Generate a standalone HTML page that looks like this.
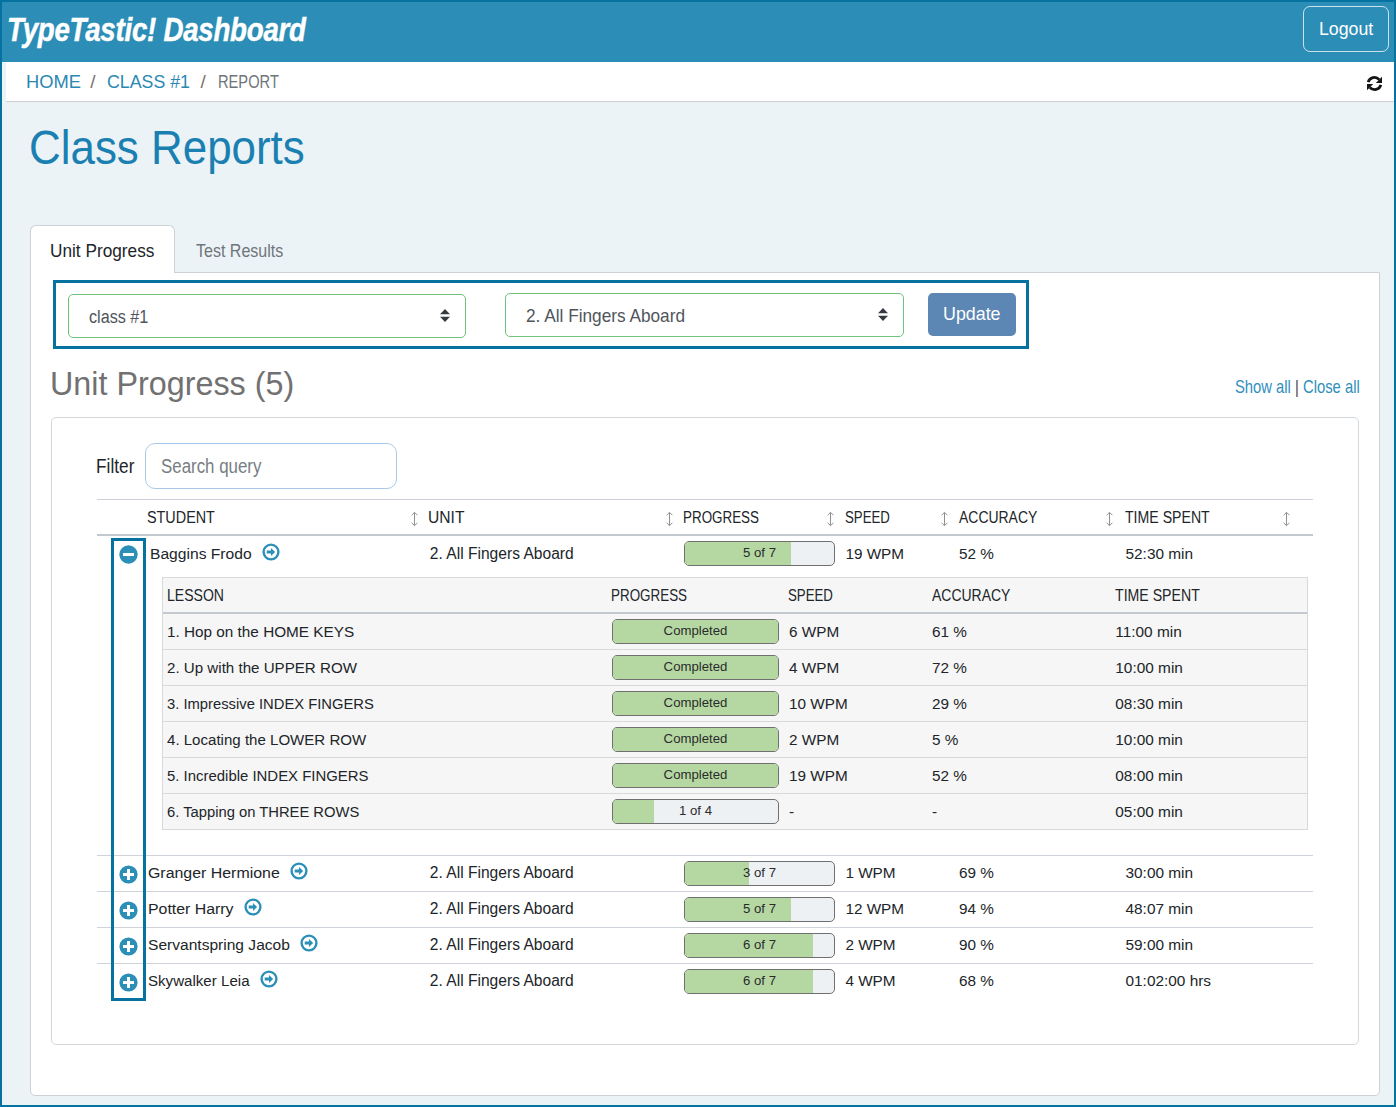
<!DOCTYPE html>
<html><head><meta charset="utf-8"><title>TypeTastic! Dashboard</title>
<style>
html,body{margin:0;padding:0;}
body{width:1396px;height:1107px;background:#ecf3f7;position:relative;overflow:hidden;font-family:"Liberation Sans", sans-serif;}
.t{position:absolute;line-height:1;white-space:nowrap;}
.b{position:absolute;}
</style></head><body>
<div class="b" style="left:0px;top:0px;width:1396px;height:62px;background:#2c8db6;"></div>
<div class="t" style="left:6.7px;top:13.44px;font-size:33.5px;color:#fff;transform:scaleX(0.826);transform-origin:0 0;font-weight:bold;font-style:italic;letter-spacing:-0.3px;-webkit-text-stroke:0.5px #fff;">TypeTastic! Dashboard</div>
<div class="b" style="left:1303px;top:6px;width:86px;height:46px;border:1px solid rgba(255,255,255,0.75);border-radius:7px;box-sizing:border-box;"></div>
<div class="t" style="left:1318.74px;top:20.03px;font-size:18.75px;color:#fff;transform:scaleX(0.9466);transform-origin:0 0;">Logout</div>
<div class="b" style="left:6px;top:62px;width:1388px;height:39px;background:#fff;border-bottom:1px solid #cdd1d4;"></div>
<div class="t" style="left:25.70px;top:71.78px;font-size:19.04px;color:#2a88b2;transform:scaleX(0.9609);transform-origin:0 0;">HOME</div>
<div class="t" style="left:90.2px;top:71.82px;font-size:19px;color:#7d7068;">/</div>
<div class="t" style="left:107.10px;top:71.78px;font-size:19.04px;color:#2a88b2;transform:scaleX(0.9332);transform-origin:0 0;">CLASS #1</div>
<div class="t" style="left:200.5px;top:71.82px;font-size:19px;color:#7d7068;">/</div>
<div class="t" style="left:218.00px;top:71.78px;font-size:19.04px;color:#6f757b;transform:scaleX(0.7706);transform-origin:0 0;">REPORT</div>
<svg class="b" style="left:1366px;top:75px" width="17" height="17" viewBox="0 0 17 17">
<path d="M2.2 7.2 A6.4 6.4 0 0 1 13.2 4.6" fill="none" stroke="#151515" stroke-width="2.8"/>
<path d="M16 1.8 L16 8 L9.8 8 Z" fill="#151515"/>
<path d="M14.8 9.8 A6.4 6.4 0 0 1 3.8 12.4" fill="none" stroke="#151515" stroke-width="2.8"/>
<path d="M1 15.2 L1 9 L7.2 9 Z" fill="#151515"/>
</svg>
<div class="t" style="left:28.77px;top:124.22px;font-size:47.82px;color:#1a80b1;transform:scaleX(0.9185);transform-origin:0 0;">Class Reports</div>
<div class="b" style="left:30px;top:272px;width:1350px;height:824px;background:#fff;border:1px solid #cdd2d6;border-top-color:#cdd2d6;border-radius:0 0 5px 5px;box-sizing:border-box;"></div>
<div class="b" style="left:30px;top:225px;width:145px;height:48px;background:#fff;border:1px solid #cdd2d6;border-bottom:none;border-radius:6px 6px 0 0;box-sizing:border-box;"></div>
<div class="t" style="left:49.87px;top:242.24px;font-size:18.02px;color:#212529;transform:scaleX(0.9567);transform-origin:0 0;">Unit Progress</div>
<div class="t" style="left:195.74px;top:242.22px;font-size:18.17px;color:#6f757b;transform:scaleX(0.8819);transform-origin:0 0;">Test Results</div>
<div class="b" style="left:68px;top:294px;width:398px;height:44px;border:1px solid #6ec27a;border-radius:5px;box-sizing:border-box;"></div>
<div class="b" style="left:505px;top:293px;width:399px;height:44px;border:1px solid #6ec27a;border-radius:5px;box-sizing:border-box;"></div>
<div class="t" style="left:89.01px;top:307.59px;font-size:18.79px;color:#4f555b;transform:scaleX(0.8613);transform-origin:0 0;">class #1</div>
<div class="t" style="left:525.63px;top:307.12px;font-size:18.17px;color:#4f555b;transform:scaleX(0.9488);transform-origin:0 0;">2. All Fingers Aboard</div>
<svg class="b" style="left:440px;top:309px" width="10" height="13" viewBox="0 0 10 13"><path d="M0 5.2 L5 0 L10 5.2 Z M0 7.8 L5 13 L10 7.8 Z" fill="#343a40"/></svg>
<svg class="b" style="left:878px;top:308px" width="10" height="13" viewBox="0 0 10 13"><path d="M0 5.2 L5 0 L10 5.2 Z M0 7.8 L5 13 L10 7.8 Z" fill="#343a40"/></svg>
<div class="b" style="left:928px;top:293px;width:88px;height:43px;background:#5c86b3;border-radius:5px;"></div>
<div class="t" style="left:943.12px;top:304.92px;font-size:18.17px;color:#fff;transform:scaleX(0.9827);transform-origin:0 0;">Update</div>
<div class="t" style="left:49.51px;top:366.68px;font-size:33.58px;color:#717171;transform:scaleX(0.9623);transform-origin:0 0;">Unit Progress (5)</div>
<div class="t" style="left:1234.73px;top:378.79px;font-size:17.73px;color:#2f8fbd;transform:scaleX(0.8346);transform-origin:0 0;"><span style="color:#2f8fbd">Show all</span> <span style="color:#454545">|</span> <span style="color:#2f8fbd">Close all</span></div>
<div class="b" style="left:51px;top:417px;width:1308px;height:628px;border:1px solid #d3d8dc;border-radius:5px;box-sizing:border-box;"></div>
<div class="t" style="left:96.18px;top:457.07px;font-size:19.77px;color:#212529;transform:scaleX(0.8743);transform-origin:0 0;">Filter</div>
<div class="b" style="left:145px;top:443px;width:252px;height:46px;border:1px solid #a9c9e8;border-radius:10px;box-sizing:border-box;"></div>
<div class="t" style="left:161.23px;top:456.57px;font-size:19.77px;color:#777d83;transform:scaleX(0.8539);transform-origin:0 0;">Search query</div>
<div class="b" style="left:97px;top:499px;width:1216px;height:1px;background:#ccd1d7;"></div>
<div class="b" style="left:97px;top:534px;width:1216px;height:2px;background:#c4c9d0;"></div>
<div class="b" style="left:97px;top:855px;width:1216px;height:1px;background:#cfd4da;"></div>
<div class="b" style="left:97px;top:891px;width:1216px;height:1px;background:#cfd4da;"></div>
<div class="b" style="left:97px;top:927px;width:1216px;height:1px;background:#cfd4da;"></div>
<div class="b" style="left:97px;top:963px;width:1216px;height:1px;background:#cfd4da;"></div>
<div class="t" style="left:147.25px;top:509.24px;font-size:16.13px;color:#212529;transform:scaleX(0.8923);transform-origin:0 0;">STUDENT</div>
<svg class="b" style="left:410px;top:511px" width="9" height="16" viewBox="0 0 9 16"><path d="M4.5 1.6 V14.4 M1.6 4.2 L4.5 1.3 L7.4 4.2 M1.6 11.8 L4.5 14.7 L7.4 11.8" fill="none" stroke="#8f8f8f" stroke-width="1"/></svg>
<div class="t" style="left:428.29px;top:509.24px;font-size:16.13px;color:#212529;transform:scaleX(0.9688);transform-origin:0 0;">UNIT</div>
<svg class="b" style="left:665px;top:511px" width="9" height="16" viewBox="0 0 9 16"><path d="M4.5 1.6 V14.4 M1.6 4.2 L4.5 1.3 L7.4 4.2 M1.6 11.8 L4.5 14.7 L7.4 11.8" fill="none" stroke="#8f8f8f" stroke-width="1"/></svg>
<div class="t" style="left:683.40px;top:509.24px;font-size:16.13px;color:#212529;transform:scaleX(0.8324);transform-origin:0 0;">PROGRESS</div>
<svg class="b" style="left:826px;top:511px" width="9" height="16" viewBox="0 0 9 16"><path d="M4.5 1.6 V14.4 M1.6 4.2 L4.5 1.3 L7.4 4.2 M1.6 11.8 L4.5 14.7 L7.4 11.8" fill="none" stroke="#8f8f8f" stroke-width="1"/></svg>
<div class="t" style="left:844.80px;top:509.24px;font-size:16.13px;color:#212529;transform:scaleX(0.8216);transform-origin:0 0;">SPEED</div>
<svg class="b" style="left:940px;top:511px" width="9" height="16" viewBox="0 0 9 16"><path d="M4.5 1.6 V14.4 M1.6 4.2 L4.5 1.3 L7.4 4.2 M1.6 11.8 L4.5 14.7 L7.4 11.8" fill="none" stroke="#8f8f8f" stroke-width="1"/></svg>
<div class="t" style="left:958.87px;top:509.24px;font-size:16.13px;color:#212529;transform:scaleX(0.8663);transform-origin:0 0;">ACCURACY</div>
<svg class="b" style="left:1105px;top:511px" width="9" height="16" viewBox="0 0 9 16"><path d="M4.5 1.6 V14.4 M1.6 4.2 L4.5 1.3 L7.4 4.2 M1.6 11.8 L4.5 14.7 L7.4 11.8" fill="none" stroke="#8f8f8f" stroke-width="1"/></svg>
<div class="t" style="left:1125.18px;top:509.24px;font-size:16.13px;color:#212529;transform:scaleX(0.8764);transform-origin:0 0;">TIME SPENT</div>
<svg class="b" style="left:1282px;top:511px" width="9" height="16" viewBox="0 0 9 16"><path d="M4.5 1.6 V14.4 M1.6 4.2 L4.5 1.3 L7.4 4.2 M1.6 11.8 L4.5 14.7 L7.4 11.8" fill="none" stroke="#8f8f8f" stroke-width="1"/></svg>
<svg class="b" style="left:119.0px;top:544.8px" width="19" height="19" viewBox="0 0 19 19"><circle cx="9.5" cy="9.5" r="9.2" fill="#2b8fb8"/><rect x="4" y="8" width="11" height="3" fill="#fff"/></svg>
<div class="t" style="left:150.22px;top:545.66px;font-size:15.40px;color:#212529;transform:scaleX(1.0148);transform-origin:0 0;">Baggins Frodo</div>
<svg class="b" style="left:262.2px;top:542.7px" width="18" height="18" viewBox="0 0 18 18"><circle cx="9" cy="9" r="7.4" fill="none" stroke="#2b8fb8" stroke-width="2.4"/><path d="M4.7 7.5 H9 V5 L13.1 9 L9 13 V10.5 H4.7 Z" fill="#2b8fb8"/></svg>
<div class="t" style="left:429.8px;top:546.29px;font-size:15.6px;color:#212529;">2. All Fingers Aboard</div>
<div class="b" style="left:684px;top:541px;width:151px;height:25px;border:1px solid #707070;border-radius:5px;box-sizing:border-box;background:#eef1f4;overflow:hidden;"><div style="position:absolute;left:0;top:0;bottom:0;width:106px;background:#b5d8a3;"></div><div style="position:absolute;left:0;right:0;top:0;bottom:0;text-align:center;font-size:13.2px;line-height:21px;color:#2b2b2b;">5 of 7</div></div>
<div class="t" style="left:845.4px;top:545.75px;font-size:15.3px;color:#212529;">19 WPM</div>
<div class="t" style="left:958.9px;top:545.75px;font-size:15.3px;color:#212529;">52 %</div>
<div class="t" style="left:1125.5px;top:545.66px;font-size:15.4px;color:#212529;">52:30 min</div>
<div class="b" style="left:162px;top:577px;width:1146px;height:253px;background:#f6f6f6;border:1px solid #d7dadd;box-sizing:border-box;"></div>
<div class="b" style="left:163px;top:612px;width:1144px;height:2px;background:#c4c9d0;"></div>
<div class="b" style="left:163px;top:649px;width:1144px;height:1px;background:#d7dadd;"></div>
<div class="b" style="left:163px;top:685px;width:1144px;height:1px;background:#d7dadd;"></div>
<div class="b" style="left:163px;top:721px;width:1144px;height:1px;background:#d7dadd;"></div>
<div class="b" style="left:163px;top:757px;width:1144px;height:1px;background:#d7dadd;"></div>
<div class="b" style="left:163px;top:793px;width:1144px;height:1px;background:#d7dadd;"></div>
<div class="t" style="left:167.15px;top:587.91px;font-size:15.70px;color:#212529;transform:scaleX(0.8950);transform-origin:0 0;">LESSON</div>
<div class="t" style="left:610.90px;top:587.91px;font-size:15.70px;color:#212529;transform:scaleX(0.8555);transform-origin:0 0;">PROGRESS</div>
<div class="t" style="left:788.40px;top:587.91px;font-size:15.70px;color:#212529;transform:scaleX(0.8444);transform-origin:0 0;">SPEED</div>
<div class="t" style="left:931.97px;top:587.91px;font-size:15.70px;color:#212529;transform:scaleX(0.8904);transform-origin:0 0;">ACCURACY</div>
<div class="t" style="left:1114.98px;top:587.91px;font-size:15.70px;color:#212529;transform:scaleX(0.9007);transform-origin:0 0;">TIME SPENT</div>
<div class="t" style="left:166.63px;top:623.73px;font-size:15.20px;color:#212529;transform:scaleX(1.0076);transform-origin:0 0;">1. Hop on the HOME KEYS</div>
<div class="b" style="left:612px;top:618.5px;width:167px;height:25px;border:1px solid #707070;border-radius:5px;box-sizing:border-box;background:#eef1f4;overflow:hidden;"><div style="position:absolute;left:0;top:0;bottom:0;width:165px;background:#b5d8a3;"></div><div style="position:absolute;left:0;right:0;top:0;bottom:0;text-align:center;font-size:13.2px;line-height:21px;color:#2b2b2b;">Completed</div></div>
<div class="t" style="left:789px;top:623.65px;font-size:15.3px;color:#212529;">6 WPM</div>
<div class="t" style="left:932px;top:623.65px;font-size:15.3px;color:#212529;">61 %</div>
<div class="t" style="left:1115.3px;top:623.56px;font-size:15.4px;color:#212529;">11:00 min</div>
<div class="t" style="left:167.04px;top:659.73px;font-size:15.20px;color:#212529;transform:scaleX(0.9959);transform-origin:0 0;">2. Up with the UPPER ROW</div>
<div class="b" style="left:612px;top:654.5px;width:167px;height:25px;border:1px solid #707070;border-radius:5px;box-sizing:border-box;background:#eef1f4;overflow:hidden;"><div style="position:absolute;left:0;top:0;bottom:0;width:165px;background:#b5d8a3;"></div><div style="position:absolute;left:0;right:0;top:0;bottom:0;text-align:center;font-size:13.2px;line-height:21px;color:#2b2b2b;">Completed</div></div>
<div class="t" style="left:789px;top:659.65px;font-size:15.3px;color:#212529;">4 WPM</div>
<div class="t" style="left:932px;top:659.65px;font-size:15.3px;color:#212529;">72 %</div>
<div class="t" style="left:1115.3px;top:659.56px;font-size:15.4px;color:#212529;">10:00 min</div>
<div class="t" style="left:167.24px;top:695.73px;font-size:15.20px;color:#212529;transform:scaleX(0.9727);transform-origin:0 0;">3. Impressive INDEX FINGERS</div>
<div class="b" style="left:612px;top:690.5px;width:167px;height:25px;border:1px solid #707070;border-radius:5px;box-sizing:border-box;background:#eef1f4;overflow:hidden;"><div style="position:absolute;left:0;top:0;bottom:0;width:165px;background:#b5d8a3;"></div><div style="position:absolute;left:0;right:0;top:0;bottom:0;text-align:center;font-size:13.2px;line-height:21px;color:#2b2b2b;">Completed</div></div>
<div class="t" style="left:789px;top:695.65px;font-size:15.3px;color:#212529;">10 WPM</div>
<div class="t" style="left:932px;top:695.65px;font-size:15.3px;color:#212529;">29 %</div>
<div class="t" style="left:1115.3px;top:695.56px;font-size:15.4px;color:#212529;">08:30 min</div>
<div class="t" style="left:167.45px;top:731.73px;font-size:15.20px;color:#212529;transform:scaleX(0.9918);transform-origin:0 0;">4. Locating the LOWER ROW</div>
<div class="b" style="left:612px;top:726.5px;width:167px;height:25px;border:1px solid #707070;border-radius:5px;box-sizing:border-box;background:#eef1f4;overflow:hidden;"><div style="position:absolute;left:0;top:0;bottom:0;width:165px;background:#b5d8a3;"></div><div style="position:absolute;left:0;right:0;top:0;bottom:0;text-align:center;font-size:13.2px;line-height:21px;color:#2b2b2b;">Completed</div></div>
<div class="t" style="left:789px;top:731.65px;font-size:15.3px;color:#212529;">2 WPM</div>
<div class="t" style="left:932px;top:731.65px;font-size:15.3px;color:#212529;">5 %</div>
<div class="t" style="left:1115.3px;top:731.56px;font-size:15.4px;color:#212529;">10:00 min</div>
<div class="t" style="left:167.20px;top:767.73px;font-size:15.20px;color:#212529;transform:scaleX(0.9825);transform-origin:0 0;">5. Incredible INDEX FINGERS</div>
<div class="b" style="left:612px;top:762.5px;width:167px;height:25px;border:1px solid #707070;border-radius:5px;box-sizing:border-box;background:#eef1f4;overflow:hidden;"><div style="position:absolute;left:0;top:0;bottom:0;width:165px;background:#b5d8a3;"></div><div style="position:absolute;left:0;right:0;top:0;bottom:0;text-align:center;font-size:13.2px;line-height:21px;color:#2b2b2b;">Completed</div></div>
<div class="t" style="left:789px;top:767.65px;font-size:15.3px;color:#212529;">19 WPM</div>
<div class="t" style="left:932px;top:767.65px;font-size:15.3px;color:#212529;">52 %</div>
<div class="t" style="left:1115.3px;top:767.56px;font-size:15.4px;color:#212529;">08:00 min</div>
<div class="t" style="left:167.05px;top:803.73px;font-size:15.20px;color:#212529;transform:scaleX(0.9721);transform-origin:0 0;">6. Tapping on THREE ROWS</div>
<div class="b" style="left:612px;top:798.5px;width:167px;height:25px;border:1px solid #707070;border-radius:5px;box-sizing:border-box;background:#eef1f4;overflow:hidden;"><div style="position:absolute;left:0;top:0;bottom:0;width:41px;background:#b5d8a3;"></div><div style="position:absolute;left:0;right:0;top:0;bottom:0;text-align:center;font-size:13.2px;line-height:21px;color:#2b2b2b;">1 of 4</div></div>
<div class="t" style="left:789px;top:803.65px;font-size:15.3px;color:#212529;">-</div>
<div class="t" style="left:932px;top:803.65px;font-size:15.3px;color:#212529;">-</div>
<div class="t" style="left:1115.3px;top:803.56px;font-size:15.4px;color:#212529;">05:00 min</div>
<svg class="b" style="left:119.0px;top:864.9px" width="19" height="19" viewBox="0 0 19 19"><circle cx="9.5" cy="9.5" r="9.1" fill="#2b8fb8"/><rect x="4" y="8" width="11" height="3" fill="#fff"/><rect x="8" y="4" width="3" height="11" fill="#fff"/></svg>
<div class="t" style="left:148.30px;top:864.56px;font-size:15.40px;color:#212529;transform:scaleX(1.0335);transform-origin:0 0;">Granger Hermione</div>
<svg class="b" style="left:289.5px;top:862.4px" width="18" height="18" viewBox="0 0 18 18"><circle cx="9" cy="9" r="7.4" fill="none" stroke="#2b8fb8" stroke-width="2.4"/><path d="M4.7 7.5 H9 V5 L13.1 9 L9 13 V10.5 H4.7 Z" fill="#2b8fb8"/></svg>
<div class="t" style="left:429.8px;top:865.19px;font-size:15.6px;color:#212529;">2. All Fingers Aboard</div>
<div class="b" style="left:684px;top:861px;width:151px;height:25px;border:1px solid #707070;border-radius:5px;box-sizing:border-box;background:#eef1f4;overflow:hidden;"><div style="position:absolute;left:0;top:0;bottom:0;width:64px;background:#b5d8a3;"></div><div style="position:absolute;left:0;right:0;top:0;bottom:0;text-align:center;font-size:13.2px;line-height:21px;color:#2b2b2b;">3 of 7</div></div>
<div class="t" style="left:845.4px;top:864.65px;font-size:15.3px;color:#212529;">1 WPM</div>
<div class="t" style="left:958.9px;top:864.65px;font-size:15.3px;color:#212529;">69 %</div>
<div class="t" style="left:1125.5px;top:864.56px;font-size:15.4px;color:#212529;">30:00 min</div>
<svg class="b" style="left:119.0px;top:900.9px" width="19" height="19" viewBox="0 0 19 19"><circle cx="9.5" cy="9.5" r="9.1" fill="#2b8fb8"/><rect x="4" y="8" width="11" height="3" fill="#fff"/><rect x="8" y="4" width="3" height="11" fill="#fff"/></svg>
<div class="t" style="left:147.80px;top:900.56px;font-size:15.40px;color:#212529;transform:scaleX(1.0304);transform-origin:0 0;">Potter Harry</div>
<svg class="b" style="left:243.5px;top:898.4px" width="18" height="18" viewBox="0 0 18 18"><circle cx="9" cy="9" r="7.4" fill="none" stroke="#2b8fb8" stroke-width="2.4"/><path d="M4.7 7.5 H9 V5 L13.1 9 L9 13 V10.5 H4.7 Z" fill="#2b8fb8"/></svg>
<div class="t" style="left:429.8px;top:901.19px;font-size:15.6px;color:#212529;">2. All Fingers Aboard</div>
<div class="b" style="left:684px;top:897px;width:151px;height:25px;border:1px solid #707070;border-radius:5px;box-sizing:border-box;background:#eef1f4;overflow:hidden;"><div style="position:absolute;left:0;top:0;bottom:0;width:106px;background:#b5d8a3;"></div><div style="position:absolute;left:0;right:0;top:0;bottom:0;text-align:center;font-size:13.2px;line-height:21px;color:#2b2b2b;">5 of 7</div></div>
<div class="t" style="left:845.4px;top:900.65px;font-size:15.3px;color:#212529;">12 WPM</div>
<div class="t" style="left:958.9px;top:900.65px;font-size:15.3px;color:#212529;">94 %</div>
<div class="t" style="left:1125.5px;top:900.56px;font-size:15.4px;color:#212529;">48:07 min</div>
<svg class="b" style="left:119.0px;top:936.9px" width="19" height="19" viewBox="0 0 19 19"><circle cx="9.5" cy="9.5" r="9.1" fill="#2b8fb8"/><rect x="4" y="8" width="11" height="3" fill="#fff"/><rect x="8" y="4" width="3" height="11" fill="#fff"/></svg>
<div class="t" style="left:148.39px;top:936.56px;font-size:15.40px;color:#212529;transform:scaleX(1.0112);transform-origin:0 0;">Servantspring Jacob</div>
<svg class="b" style="left:299.5px;top:934.4px" width="18" height="18" viewBox="0 0 18 18"><circle cx="9" cy="9" r="7.4" fill="none" stroke="#2b8fb8" stroke-width="2.4"/><path d="M4.7 7.5 H9 V5 L13.1 9 L9 13 V10.5 H4.7 Z" fill="#2b8fb8"/></svg>
<div class="t" style="left:429.8px;top:937.19px;font-size:15.6px;color:#212529;">2. All Fingers Aboard</div>
<div class="b" style="left:684px;top:933px;width:151px;height:25px;border:1px solid #707070;border-radius:5px;box-sizing:border-box;background:#eef1f4;overflow:hidden;"><div style="position:absolute;left:0;top:0;bottom:0;width:128px;background:#b5d8a3;"></div><div style="position:absolute;left:0;right:0;top:0;bottom:0;text-align:center;font-size:13.2px;line-height:21px;color:#2b2b2b;">6 of 7</div></div>
<div class="t" style="left:845.4px;top:936.65px;font-size:15.3px;color:#212529;">2 WPM</div>
<div class="t" style="left:958.9px;top:936.65px;font-size:15.3px;color:#212529;">90 %</div>
<div class="t" style="left:1125.5px;top:936.56px;font-size:15.4px;color:#212529;">59:00 min</div>
<svg class="b" style="left:119.0px;top:972.9px" width="19" height="19" viewBox="0 0 19 19"><circle cx="9.5" cy="9.5" r="9.1" fill="#2b8fb8"/><rect x="4" y="8" width="11" height="3" fill="#fff"/><rect x="8" y="4" width="3" height="11" fill="#fff"/></svg>
<div class="t" style="left:148.41px;top:972.56px;font-size:15.40px;color:#212529;transform:scaleX(0.9809);transform-origin:0 0;">Skywalker Leia</div>
<svg class="b" style="left:260px;top:970.4px" width="18" height="18" viewBox="0 0 18 18"><circle cx="9" cy="9" r="7.4" fill="none" stroke="#2b8fb8" stroke-width="2.4"/><path d="M4.7 7.5 H9 V5 L13.1 9 L9 13 V10.5 H4.7 Z" fill="#2b8fb8"/></svg>
<div class="t" style="left:429.8px;top:973.19px;font-size:15.6px;color:#212529;">2. All Fingers Aboard</div>
<div class="b" style="left:684px;top:969px;width:151px;height:25px;border:1px solid #707070;border-radius:5px;box-sizing:border-box;background:#eef1f4;overflow:hidden;"><div style="position:absolute;left:0;top:0;bottom:0;width:128px;background:#b5d8a3;"></div><div style="position:absolute;left:0;right:0;top:0;bottom:0;text-align:center;font-size:13.2px;line-height:21px;color:#2b2b2b;">6 of 7</div></div>
<div class="t" style="left:845.4px;top:972.65px;font-size:15.3px;color:#212529;">4 WPM</div>
<div class="t" style="left:958.9px;top:972.65px;font-size:15.3px;color:#212529;">68 %</div>
<div class="t" style="left:1125.5px;top:972.56px;font-size:15.4px;color:#212529;">01:02:00 hrs</div>
<div class="b" style="left:53px;top:280px;width:976px;height:69px;border:3px solid #0672a0;box-sizing:border-box;"></div>
<div class="b" style="left:111px;top:538px;width:35px;height:463px;border:3px solid #0672a0;box-sizing:border-box;"></div>
<div class="b" style="left:0px;top:0px;width:1396px;height:1107px;border-style:solid;border-color:#0672a0;border-width:2px;box-sizing:border-box;"></div>
</body></html>
